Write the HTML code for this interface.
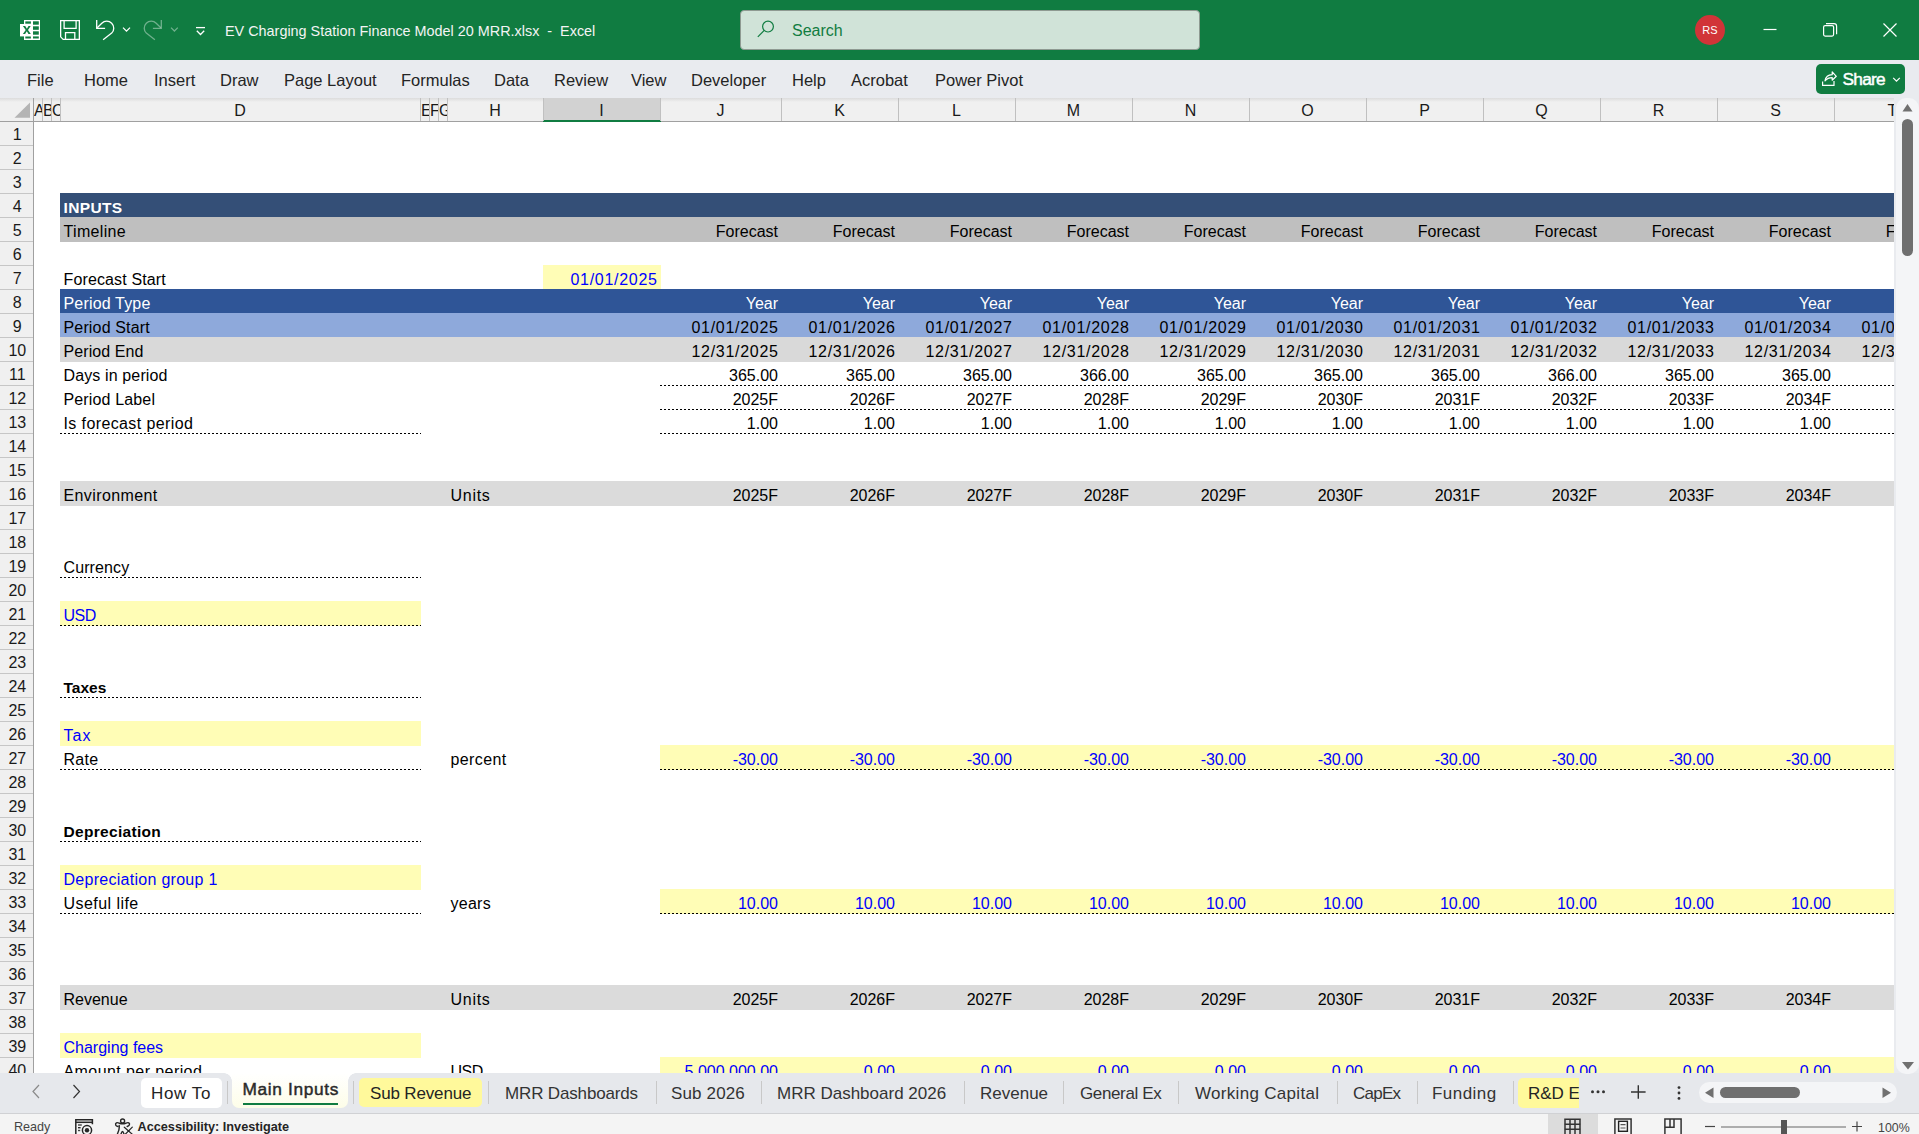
<!DOCTYPE html><html><head><meta charset="utf-8"><style>

*{box-sizing:border-box}
html,body{margin:0;padding:0}
body{width:1919px;height:1134px;overflow:hidden;position:relative;font-family:"Liberation Sans",sans-serif;background:#fff;color:#000}
.a{position:absolute}
.t{position:absolute;white-space:pre;line-height:1}
.c{position:absolute;white-space:pre;font-size:16px;line-height:24px;height:24px;overflow:visible}
.r{text-align:right}
.w{color:#fff}
.b{color:#0000FF}
.bd{font-weight:bold;font-size:15.5px}
.dot{position:absolute;height:1px;background:repeating-linear-gradient(90deg,#000 0 2px,transparent 2px 4px)}
.ch{position:absolute;top:98px;height:23px;font-size:16px;line-height:23px;text-align:center;color:#222;border-right:1px solid #C6C6C6}
.rh{position:absolute;left:0;width:33px;height:24px;font-size:16px;line-height:24px;text-align:center;color:#222;border-bottom:1px solid #C6C6C6}
.tab{position:absolute;white-space:pre;font-size:16.6px;line-height:1;color:#242424}
.sep{position:absolute;top:1081px;width:1px;height:23px;background:#C8C8C8}

</style></head><body>
<div class="a" style="left:0;top:0;width:1919px;height:60px;background:#107C41"></div>
<svg class="a" style="left:0;top:0" width="220" height="60" viewBox="0 0 220 60">
<g fill="#fff">
  <rect x="24" y="20" width="16" height="20"/>
  <rect x="20" y="24" width="13" height="12.4"/>
</g>
<g fill="#107C41">
  <rect x="33" y="21.3" width="5.8" height="3.4"/>
  <rect x="33" y="26.3" width="5.8" height="3.5"/>
  <rect x="33" y="31.3" width="5.8" height="3.4"/>
  <rect x="33" y="36.4" width="5.8" height="2.1"/>
  <rect x="25.3" y="21.4" width="5.6" height="2.3"/>
  <rect x="25.3" y="36.5" width="5.6" height="2"/>
  <path d="M22.9 26h2.3l1.7 2.7l1.6-2.7h2.2l-2.7 4l2.8 4h-2.3l-1.7-2.8l-1.7 2.8h-2.2l2.8-4z"/>
</g>
<g fill="none" stroke="#fff" stroke-width="1.3">
  <path d="M60.65 20.65h18.7v18.7h-16.2l-2.5-2.5z"/>
  <path d="M64.1 20.65v7.7h12v-7.7"/>
  <path d="M65.5 39.35v-6.8h9.3v6.8"/>
</g>
<g fill="none" stroke="#fff" stroke-width="1.3" stroke-linecap="butt">
  <path d="M96.7 20v8.3h8.4"/>
  <path d="M97.2 27.8l4.6-4.6a7 7 0 0 1 9.9 9.9l-8.6 6.6" stroke-linejoin="round"/>
  <path d="M123 27.6l3.5 3.5l3.5-3.5"/>
</g>
<g fill="none" stroke="#fff" stroke-opacity="0.4" stroke-width="1.3">
  <path d="M161.3 20v8.3h-8.4"/>
  <path d="M160.8 27.8l-4.6-4.6a7 7 0 0 0 -9.9 9.9l8.6 6.6"/>
  <path d="M171 27.6l3.4 3.4l3.4-3.4"/>
</g>
<g fill="none" stroke="#fff" stroke-width="1.3">
  <path d="M196 27.6h9"/>
  <path d="M196.8 30.8l3.7 3.7l3.7-3.7"/>
</g>
</svg>
<div class="t" style="left:225px;top:24px;font-size:14.4px;color:#F4F4F4">EV Charging Station Finance Model 20 MRR.xlsx  -  Excel</div>
<div class="a" style="left:740px;top:10px;width:460px;height:40px;background:#D0E3D8;border:1px solid #8E9A92;border-radius:4px"></div>
<svg class="a" style="left:750px;top:15px" width="30" height="30" viewBox="750 15 30 30">
<g fill="none" stroke="#107C41" stroke-width="1.2"><circle cx="768" cy="26.6" r="5.4"/><path d="M764.2 30.4l-6.4 6.4"/></g></svg>
<div class="t" style="left:792px;top:22.5px;font-size:16px;color:#107C41">Search</div>
<div class="a" style="left:1695px;top:15px;width:30px;height:30px;border-radius:50%;background:#D13438"></div>
<div class="t" style="left:1695px;top:25px;width:30px;text-align:center;font-size:11px;color:#fff">RS</div>
<svg class="a" style="left:1750px;top:15px" width="160" height="30" viewBox="1750 15 160 30">
<g fill="none" stroke="#fff" stroke-width="1.2">
<path d="M1763.5 29.5h13"/>
<rect x="1823.6" y="25.6" width="10" height="10.5" rx="1.5"/>
<path d="M1826 23.6h8a2.6 2.6 0 0 1 2.6 2.6v8"/>
<path d="M1883.5 23.5l13 13M1896.5 23.5l-13 13"/>
</g></svg>
<div class="a" style="left:0;top:60px;width:1919px;height:38px;background:#E9EBEF"></div>
<div class="t" style="left:27px;top:72px;font-size:16.5px;color:#242424">File</div>
<div class="t" style="left:84px;top:72px;font-size:16.5px;color:#242424">Home</div>
<div class="t" style="left:154px;top:72px;font-size:16.5px;color:#242424">Insert</div>
<div class="t" style="left:220px;top:72px;font-size:16.5px;color:#242424">Draw</div>
<div class="t" style="left:284px;top:72px;font-size:16.5px;color:#242424">Page Layout</div>
<div class="t" style="left:401px;top:72px;font-size:16.5px;color:#242424">Formulas</div>
<div class="t" style="left:494px;top:72px;font-size:16.5px;color:#242424">Data</div>
<div class="t" style="left:554px;top:72px;font-size:16.5px;color:#242424">Review</div>
<div class="t" style="left:631px;top:72px;font-size:16.5px;color:#242424">View</div>
<div class="t" style="left:691px;top:72px;font-size:16.5px;color:#242424">Developer</div>
<div class="t" style="left:792px;top:72px;font-size:16.5px;color:#242424">Help</div>
<div class="t" style="left:851px;top:72px;font-size:16.5px;color:#242424">Acrobat</div>
<div class="t" style="left:935px;top:72px;font-size:16.5px;color:#242424">Power Pivot</div>
<div class="a" style="left:1816px;top:64px;width:89px;height:30px;background:#107C41;border-radius:5px"></div>
<svg class="a" style="left:1816px;top:64px" width="89" height="30" viewBox="1816 64 89 30">
<g fill="none" stroke="#fff" stroke-width="1.2">
<path d="M1822.6 81.4v3.9h11.4v-4.3"/>
<path d="M1825 80.8C1825.6 77.2 1828.2 74.9 1832.2 74.7V71.9L1836.3 76.3L1832.2 80.2V77.6C1829.2 77.6 1826.8 78.7 1825 80.8Z" stroke-linejoin="round"/>
<path d="M1893.2 77.8l3.3 3.3l3.3-3.3"/>
</g></svg>
<div class="t" style="left:1842.5px;top:70.5px;font-size:17.3px;letter-spacing:-0.75px;-webkit-text-stroke:0.45px #fff;color:#fff">Share</div>
<div class="a" style="left:34px;top:122px;width:1860px;height:951px;overflow:hidden;background:#fff">
<div class="a" style="left:26px;top:71px;width:1892px;height:25px;background:#344F77"></div>
<div class="a" style="left:26px;top:95px;width:1892px;height:25px;background:#BFBFBF"></div>
<div class="a" style="left:509px;top:143px;width:118px;height:25px;background:#FFFDB6"></div>
<div class="a" style="left:26px;top:167px;width:1892px;height:25px;background:#2F5597"></div>
<div class="a" style="left:26px;top:191px;width:1892px;height:25px;background:#8EA9DB"></div>
<div class="a" style="left:26px;top:215px;width:1892px;height:25px;background:#D9D9D9"></div>
<div class="a" style="left:26px;top:359px;width:1892px;height:25px;background:#DBDBDB"></div>
<div class="a" style="left:26px;top:479px;width:361px;height:25px;background:#FFFDB6"></div>
<div class="a" style="left:26px;top:599px;width:361px;height:25px;background:#FFFDB6"></div>
<div class="a" style="left:626px;top:623px;width:1292px;height:25px;background:#FFFDB6"></div>
<div class="a" style="left:26px;top:743px;width:361px;height:25px;background:#FFFDB6"></div>
<div class="a" style="left:626px;top:767px;width:1292px;height:25px;background:#FFFDB6"></div>
<div class="a" style="left:26px;top:863px;width:1892px;height:25px;background:#DBDBDB"></div>
<div class="a" style="left:26px;top:911px;width:361px;height:25px;background:#FFFDB6"></div>
<div class="a" style="left:626px;top:935px;width:1292px;height:25px;background:#FFFDB6"></div>
<div class="dot" style="left:626px;top:263px;width:1292px"></div>
<div class="dot" style="left:626px;top:287px;width:1292px"></div>
<div class="dot" style="left:26px;top:311px;width:361px"></div>
<div class="dot" style="left:626px;top:311px;width:1292px"></div>
<div class="dot" style="left:26px;top:455px;width:361px"></div>
<div class="dot" style="left:26px;top:503px;width:361px"></div>
<div class="dot" style="left:26px;top:575px;width:361px"></div>
<div class="dot" style="left:26px;top:647px;width:361px"></div>
<div class="dot" style="left:626px;top:647px;width:1292px"></div>
<div class="dot" style="left:26px;top:719px;width:361px"></div>
<div class="dot" style="left:26px;top:791px;width:361px"></div>
<div class="dot" style="left:626px;top:791px;width:1292px"></div>
<div class="c w bd" style="left:29.5px;top:74px;letter-spacing:0.360px">INPUTS</div>
<div class="c " style="left:29.5px;top:98px;letter-spacing:0.329px">Timeline</div>
<div class="c r " style="left:626px;top:98px;width:118px">Forecast</div>
<div class="c r " style="left:747px;top:98px;width:114px">Forecast</div>
<div class="c r " style="left:864px;top:98px;width:114px">Forecast</div>
<div class="c r " style="left:981px;top:98px;width:114px">Forecast</div>
<div class="c r " style="left:1098px;top:98px;width:114px">Forecast</div>
<div class="c r " style="left:1215px;top:98px;width:114px">Forecast</div>
<div class="c r " style="left:1332px;top:98px;width:114px">Forecast</div>
<div class="c r " style="left:1449px;top:98px;width:114px">Forecast</div>
<div class="c r " style="left:1566px;top:98px;width:114px">Forecast</div>
<div class="c r " style="left:1683px;top:98px;width:114px">Forecast</div>
<div class="c r " style="left:1800px;top:98px;width:114px">Forecast</div>
<div class="c " style="left:29.5px;top:146px;letter-spacing:0.138px">Forecast Start</div>
<div class="c r b" style="left:509px;top:146px;width:114.72px;letter-spacing:0.72px">01/01/2025</div>
<div class="c w" style="left:29.5px;top:170px;letter-spacing:0.170px">Period Type</div>
<div class="c r w" style="left:626px;top:170px;width:118px">Year</div>
<div class="c r w" style="left:747px;top:170px;width:114px">Year</div>
<div class="c r w" style="left:864px;top:170px;width:114px">Year</div>
<div class="c r w" style="left:981px;top:170px;width:114px">Year</div>
<div class="c r w" style="left:1098px;top:170px;width:114px">Year</div>
<div class="c r w" style="left:1215px;top:170px;width:114px">Year</div>
<div class="c r w" style="left:1332px;top:170px;width:114px">Year</div>
<div class="c r w" style="left:1449px;top:170px;width:114px">Year</div>
<div class="c r w" style="left:1566px;top:170px;width:114px">Year</div>
<div class="c r w" style="left:1683px;top:170px;width:114px">Year</div>
<div class="c r w" style="left:1800px;top:170px;width:114px">Year</div>
<div class="c " style="left:29.5px;top:194px;letter-spacing:0.155px">Period Start</div>
<div class="c r " style="left:626px;top:194px;width:118.72px;letter-spacing:0.72px">01/01/2025</div>
<div class="c r " style="left:747px;top:194px;width:114.72px;letter-spacing:0.72px">01/01/2026</div>
<div class="c r " style="left:864px;top:194px;width:114.72px;letter-spacing:0.72px">01/01/2027</div>
<div class="c r " style="left:981px;top:194px;width:114.72px;letter-spacing:0.72px">01/01/2028</div>
<div class="c r " style="left:1098px;top:194px;width:114.72px;letter-spacing:0.72px">01/01/2029</div>
<div class="c r " style="left:1215px;top:194px;width:114.72px;letter-spacing:0.72px">01/01/2030</div>
<div class="c r " style="left:1332px;top:194px;width:114.72px;letter-spacing:0.72px">01/01/2031</div>
<div class="c r " style="left:1449px;top:194px;width:114.72px;letter-spacing:0.72px">01/01/2032</div>
<div class="c r " style="left:1566px;top:194px;width:114.72px;letter-spacing:0.72px">01/01/2033</div>
<div class="c r " style="left:1683px;top:194px;width:114.72px;letter-spacing:0.72px">01/01/2034</div>
<div class="c r " style="left:1800px;top:194px;width:114.72px;letter-spacing:0.72px">01/01/2035</div>
<div class="c " style="left:29.5px;top:218px;letter-spacing:0.078px">Period End</div>
<div class="c r " style="left:626px;top:218px;width:118.72px;letter-spacing:0.72px">12/31/2025</div>
<div class="c r " style="left:747px;top:218px;width:114.72px;letter-spacing:0.72px">12/31/2026</div>
<div class="c r " style="left:864px;top:218px;width:114.72px;letter-spacing:0.72px">12/31/2027</div>
<div class="c r " style="left:981px;top:218px;width:114.72px;letter-spacing:0.72px">12/31/2028</div>
<div class="c r " style="left:1098px;top:218px;width:114.72px;letter-spacing:0.72px">12/31/2029</div>
<div class="c r " style="left:1215px;top:218px;width:114.72px;letter-spacing:0.72px">12/31/2030</div>
<div class="c r " style="left:1332px;top:218px;width:114.72px;letter-spacing:0.72px">12/31/2031</div>
<div class="c r " style="left:1449px;top:218px;width:114.72px;letter-spacing:0.72px">12/31/2032</div>
<div class="c r " style="left:1566px;top:218px;width:114.72px;letter-spacing:0.72px">12/31/2033</div>
<div class="c r " style="left:1683px;top:218px;width:114.72px;letter-spacing:0.72px">12/31/2034</div>
<div class="c r " style="left:1800px;top:218px;width:114.72px;letter-spacing:0.72px">12/31/2035</div>
<div class="c " style="left:29.5px;top:242px;letter-spacing:0.131px">Days in period</div>
<div class="c r " style="left:626px;top:242px;width:118px">365.00</div>
<div class="c r " style="left:747px;top:242px;width:114px">365.00</div>
<div class="c r " style="left:864px;top:242px;width:114px">365.00</div>
<div class="c r " style="left:981px;top:242px;width:114px">366.00</div>
<div class="c r " style="left:1098px;top:242px;width:114px">365.00</div>
<div class="c r " style="left:1215px;top:242px;width:114px">365.00</div>
<div class="c r " style="left:1332px;top:242px;width:114px">365.00</div>
<div class="c r " style="left:1449px;top:242px;width:114px">366.00</div>
<div class="c r " style="left:1566px;top:242px;width:114px">365.00</div>
<div class="c r " style="left:1683px;top:242px;width:114px">365.00</div>
<div class="c r " style="left:1800px;top:242px;width:114px">365.00</div>
<div class="c " style="left:29.5px;top:266px;letter-spacing:0.145px">Period Label</div>
<div class="c r " style="left:626px;top:266px;width:118px">2025F</div>
<div class="c r " style="left:747px;top:266px;width:114px">2026F</div>
<div class="c r " style="left:864px;top:266px;width:114px">2027F</div>
<div class="c r " style="left:981px;top:266px;width:114px">2028F</div>
<div class="c r " style="left:1098px;top:266px;width:114px">2029F</div>
<div class="c r " style="left:1215px;top:266px;width:114px">2030F</div>
<div class="c r " style="left:1332px;top:266px;width:114px">2031F</div>
<div class="c r " style="left:1449px;top:266px;width:114px">2032F</div>
<div class="c r " style="left:1566px;top:266px;width:114px">2033F</div>
<div class="c r " style="left:1683px;top:266px;width:114px">2034F</div>
<div class="c r " style="left:1800px;top:266px;width:114px">2035F</div>
<div class="c " style="left:29.5px;top:290px;letter-spacing:0.388px">Is forecast period</div>
<div class="c r " style="left:626px;top:290px;width:118px">1.00</div>
<div class="c r " style="left:747px;top:290px;width:114px">1.00</div>
<div class="c r " style="left:864px;top:290px;width:114px">1.00</div>
<div class="c r " style="left:981px;top:290px;width:114px">1.00</div>
<div class="c r " style="left:1098px;top:290px;width:114px">1.00</div>
<div class="c r " style="left:1215px;top:290px;width:114px">1.00</div>
<div class="c r " style="left:1332px;top:290px;width:114px">1.00</div>
<div class="c r " style="left:1449px;top:290px;width:114px">1.00</div>
<div class="c r " style="left:1566px;top:290px;width:114px">1.00</div>
<div class="c r " style="left:1683px;top:290px;width:114px">1.00</div>
<div class="c r " style="left:1800px;top:290px;width:114px">1.00</div>
<div class="c " style="left:29.5px;top:362px;letter-spacing:0.390px">Environment</div>
<div class="c " style="left:416.5px;top:362px;letter-spacing:0.725px">Units</div>
<div class="c r " style="left:626px;top:362px;width:118px">2025F</div>
<div class="c r " style="left:747px;top:362px;width:114px">2026F</div>
<div class="c r " style="left:864px;top:362px;width:114px">2027F</div>
<div class="c r " style="left:981px;top:362px;width:114px">2028F</div>
<div class="c r " style="left:1098px;top:362px;width:114px">2029F</div>
<div class="c r " style="left:1215px;top:362px;width:114px">2030F</div>
<div class="c r " style="left:1332px;top:362px;width:114px">2031F</div>
<div class="c r " style="left:1449px;top:362px;width:114px">2032F</div>
<div class="c r " style="left:1566px;top:362px;width:114px">2033F</div>
<div class="c r " style="left:1683px;top:362px;width:114px">2034F</div>
<div class="c r " style="left:1800px;top:362px;width:114px">2035F</div>
<div class="c " style="left:29.5px;top:434px;letter-spacing:0.114px">Currency</div>
<div class="c b" style="left:29.5px;top:482px;letter-spacing:-0.550px">USD</div>
<div class="c bd" style="left:29.5px;top:554px">Taxes</div>
<div class="c b" style="left:29.5px;top:602px;letter-spacing:1.050px">Tax</div>
<div class="c " style="left:29.5px;top:626px;letter-spacing:0.267px">Rate</div>
<div class="c " style="left:416.5px;top:626px;letter-spacing:0.400px">percent</div>
<div class="c r b" style="left:626px;top:626px;width:118px">-30.00</div>
<div class="c r b" style="left:747px;top:626px;width:114px">-30.00</div>
<div class="c r b" style="left:864px;top:626px;width:114px">-30.00</div>
<div class="c r b" style="left:981px;top:626px;width:114px">-30.00</div>
<div class="c r b" style="left:1098px;top:626px;width:114px">-30.00</div>
<div class="c r b" style="left:1215px;top:626px;width:114px">-30.00</div>
<div class="c r b" style="left:1332px;top:626px;width:114px">-30.00</div>
<div class="c r b" style="left:1449px;top:626px;width:114px">-30.00</div>
<div class="c r b" style="left:1566px;top:626px;width:114px">-30.00</div>
<div class="c r b" style="left:1683px;top:626px;width:114px">-30.00</div>
<div class="c r b" style="left:1800px;top:626px;width:114px">-30.00</div>
<div class="c bd" style="left:29.5px;top:698px;letter-spacing:0.309px">Depreciation</div>
<div class="c b" style="left:29.5px;top:746px;letter-spacing:0.279px">Depreciation group 1</div>
<div class="c " style="left:29.5px;top:770px;letter-spacing:0.450px">Useful life</div>
<div class="c " style="left:416.5px;top:770px;letter-spacing:0.250px">years</div>
<div class="c r b" style="left:626px;top:770px;width:118px">10.00</div>
<div class="c r b" style="left:747px;top:770px;width:114px">10.00</div>
<div class="c r b" style="left:864px;top:770px;width:114px">10.00</div>
<div class="c r b" style="left:981px;top:770px;width:114px">10.00</div>
<div class="c r b" style="left:1098px;top:770px;width:114px">10.00</div>
<div class="c r b" style="left:1215px;top:770px;width:114px">10.00</div>
<div class="c r b" style="left:1332px;top:770px;width:114px">10.00</div>
<div class="c r b" style="left:1449px;top:770px;width:114px">10.00</div>
<div class="c r b" style="left:1566px;top:770px;width:114px">10.00</div>
<div class="c r b" style="left:1683px;top:770px;width:114px">10.00</div>
<div class="c r b" style="left:1800px;top:770px;width:114px">10.00</div>
<div class="c " style="left:29.5px;top:866px">Revenue</div>
<div class="c " style="left:416.5px;top:866px;letter-spacing:0.725px">Units</div>
<div class="c r " style="left:626px;top:866px;width:118px">2025F</div>
<div class="c r " style="left:747px;top:866px;width:114px">2026F</div>
<div class="c r " style="left:864px;top:866px;width:114px">2027F</div>
<div class="c r " style="left:981px;top:866px;width:114px">2028F</div>
<div class="c r " style="left:1098px;top:866px;width:114px">2029F</div>
<div class="c r " style="left:1215px;top:866px;width:114px">2030F</div>
<div class="c r " style="left:1332px;top:866px;width:114px">2031F</div>
<div class="c r " style="left:1449px;top:866px;width:114px">2032F</div>
<div class="c r " style="left:1566px;top:866px;width:114px">2033F</div>
<div class="c r " style="left:1683px;top:866px;width:114px">2034F</div>
<div class="c r " style="left:1800px;top:866px;width:114px">2035F</div>
<div class="c b" style="left:29.5px;top:914px">Charging fees</div>
<div class="c " style="left:29.5px;top:938px;letter-spacing:0.419px">Amount per period</div>
<div class="c " style="left:416.5px;top:938px;letter-spacing:-0.550px">USD</div>
<div class="c r b" style="left:626px;top:938px;width:118px">5,000,000.00</div>
<div class="c r b" style="left:747px;top:938px;width:114px">0.00</div>
<div class="c r b" style="left:864px;top:938px;width:114px">0.00</div>
<div class="c r b" style="left:981px;top:938px;width:114px">0.00</div>
<div class="c r b" style="left:1098px;top:938px;width:114px">0.00</div>
<div class="c r b" style="left:1215px;top:938px;width:114px">0.00</div>
<div class="c r b" style="left:1332px;top:938px;width:114px">0.00</div>
<div class="c r b" style="left:1449px;top:938px;width:114px">0.00</div>
<div class="c r b" style="left:1566px;top:938px;width:114px">0.00</div>
<div class="c r b" style="left:1683px;top:938px;width:114px">0.00</div>
<div class="c r b" style="left:1800px;top:938px;width:114px">0.00</div>
</div>
<div class="a" style="left:0;top:98px;width:1894px;height:23px;background:#F0F0F0"></div>
<div class="a" style="left:0;top:98px;width:1894px;height:4px;background:linear-gradient(#DCDCDC,#F0F0F0)"></div>
<div class="a" style="left:0;top:121px;width:1894px;height:1px;background:#A0A0A0"></div>
<div class="a" style="left:543px;top:98px;width:118px;height:22px;background:#D2D2D2"></div>
<div class="a" style="left:543px;top:120px;width:118px;height:2px;background:#107C41"></div>
<div id="colhdr-slot"></div>
<div class="a" style="left:33px;top:98px;width:1px;height:23px;background:#C0C0C0"></div>
<div class="a" style="left:34px;top:98px;width:8px;height:23px;overflow:hidden"><div class="t" style="left:0px;top:5px;font-size:16px;color:#1a1a1a">A</div></div>
<div class="a" style="left:42px;top:98px;width:1px;height:23px;background:#C0C0C0"></div>
<div class="a" style="left:43px;top:98px;width:8px;height:23px;overflow:hidden"><div class="t" style="left:0px;top:5px;font-size:16px;color:#1a1a1a">B</div></div>
<div class="a" style="left:51px;top:98px;width:1px;height:23px;background:#C0C0C0"></div>
<div class="a" style="left:52px;top:98px;width:8px;height:23px;overflow:hidden"><div class="t" style="left:0px;top:5px;font-size:16px;color:#1a1a1a">C</div></div>
<div class="a" style="left:60px;top:98px;width:1px;height:23px;background:#C0C0C0"></div>
<div class="a" style="left:61px;top:98px;width:359px;height:23px;overflow:hidden"><div class="t" style="left:169.0px;top:5px;width:20px;text-align:center;font-size:16px;color:#1a1a1a">D</div></div>
<div class="a" style="left:420px;top:98px;width:1px;height:23px;background:#C0C0C0"></div>
<div class="a" style="left:421px;top:98px;width:8px;height:23px;overflow:hidden"><div class="t" style="left:0px;top:5px;font-size:16px;color:#1a1a1a">E</div></div>
<div class="a" style="left:429px;top:98px;width:1px;height:23px;background:#C0C0C0"></div>
<div class="a" style="left:430px;top:98px;width:8px;height:23px;overflow:hidden"><div class="t" style="left:0px;top:5px;font-size:16px;color:#1a1a1a">F</div></div>
<div class="a" style="left:438px;top:98px;width:1px;height:23px;background:#C0C0C0"></div>
<div class="a" style="left:439px;top:98px;width:8px;height:23px;overflow:hidden"><div class="t" style="left:0px;top:5px;font-size:16px;color:#1a1a1a">G</div></div>
<div class="a" style="left:447px;top:98px;width:1px;height:23px;background:#C0C0C0"></div>
<div class="a" style="left:448px;top:98px;width:95px;height:23px;overflow:hidden"><div class="t" style="left:37.0px;top:5px;width:20px;text-align:center;font-size:16px;color:#1a1a1a">H</div></div>
<div class="a" style="left:543px;top:98px;width:1px;height:23px;background:#C0C0C0"></div>
<div class="a" style="left:544px;top:98px;width:116px;height:23px;overflow:hidden"><div class="t" style="left:47.5px;top:5px;width:20px;text-align:center;font-size:16px;color:#1a1a1a">I</div></div>
<div class="a" style="left:660px;top:98px;width:1px;height:23px;background:#C0C0C0"></div>
<div class="a" style="left:661px;top:98px;width:120px;height:23px;overflow:hidden"><div class="t" style="left:49.5px;top:5px;width:20px;text-align:center;font-size:16px;color:#1a1a1a">J</div></div>
<div class="a" style="left:781px;top:98px;width:1px;height:23px;background:#C0C0C0"></div>
<div class="a" style="left:782px;top:98px;width:116px;height:23px;overflow:hidden"><div class="t" style="left:47.5px;top:5px;width:20px;text-align:center;font-size:16px;color:#1a1a1a">K</div></div>
<div class="a" style="left:898px;top:98px;width:1px;height:23px;background:#C0C0C0"></div>
<div class="a" style="left:899px;top:98px;width:116px;height:23px;overflow:hidden"><div class="t" style="left:47.5px;top:5px;width:20px;text-align:center;font-size:16px;color:#1a1a1a">L</div></div>
<div class="a" style="left:1015px;top:98px;width:1px;height:23px;background:#C0C0C0"></div>
<div class="a" style="left:1016px;top:98px;width:116px;height:23px;overflow:hidden"><div class="t" style="left:47.5px;top:5px;width:20px;text-align:center;font-size:16px;color:#1a1a1a">M</div></div>
<div class="a" style="left:1132px;top:98px;width:1px;height:23px;background:#C0C0C0"></div>
<div class="a" style="left:1133px;top:98px;width:116px;height:23px;overflow:hidden"><div class="t" style="left:47.5px;top:5px;width:20px;text-align:center;font-size:16px;color:#1a1a1a">N</div></div>
<div class="a" style="left:1249px;top:98px;width:1px;height:23px;background:#C0C0C0"></div>
<div class="a" style="left:1250px;top:98px;width:116px;height:23px;overflow:hidden"><div class="t" style="left:47.5px;top:5px;width:20px;text-align:center;font-size:16px;color:#1a1a1a">O</div></div>
<div class="a" style="left:1366px;top:98px;width:1px;height:23px;background:#C0C0C0"></div>
<div class="a" style="left:1367px;top:98px;width:116px;height:23px;overflow:hidden"><div class="t" style="left:47.5px;top:5px;width:20px;text-align:center;font-size:16px;color:#1a1a1a">P</div></div>
<div class="a" style="left:1483px;top:98px;width:1px;height:23px;background:#C0C0C0"></div>
<div class="a" style="left:1484px;top:98px;width:116px;height:23px;overflow:hidden"><div class="t" style="left:47.5px;top:5px;width:20px;text-align:center;font-size:16px;color:#1a1a1a">Q</div></div>
<div class="a" style="left:1600px;top:98px;width:1px;height:23px;background:#C0C0C0"></div>
<div class="a" style="left:1601px;top:98px;width:116px;height:23px;overflow:hidden"><div class="t" style="left:47.5px;top:5px;width:20px;text-align:center;font-size:16px;color:#1a1a1a">R</div></div>
<div class="a" style="left:1717px;top:98px;width:1px;height:23px;background:#C0C0C0"></div>
<div class="a" style="left:1718px;top:98px;width:116px;height:23px;overflow:hidden"><div class="t" style="left:47.5px;top:5px;width:20px;text-align:center;font-size:16px;color:#1a1a1a">S</div></div>
<div class="a" style="left:1834px;top:98px;width:1px;height:23px;background:#C0C0C0"></div>
<div class="a" style="left:1835px;top:98px;width:59px;height:23px;overflow:hidden"><div class="t" style="left:47.5px;top:5px;width:20px;text-align:center;font-size:16px;color:#1a1a1a">T</div></div>
<div class="a" style="left:0;top:122px;width:33px;height:951px;background:#F0F0F0;overflow:hidden">
<div class="a" style="left:0;top:23px;width:33px;height:1px;background:#C6C6C6"></div>
<div class="t" style="left:0.8px;top:5px;width:33px;text-align:center;font-size:16px;color:#1a1a1a">1</div>
<div class="a" style="left:0;top:47px;width:33px;height:1px;background:#C6C6C6"></div>
<div class="t" style="left:0.8px;top:29px;width:33px;text-align:center;font-size:16px;color:#1a1a1a">2</div>
<div class="a" style="left:0;top:71px;width:33px;height:1px;background:#C6C6C6"></div>
<div class="t" style="left:0.8px;top:53px;width:33px;text-align:center;font-size:16px;color:#1a1a1a">3</div>
<div class="a" style="left:0;top:95px;width:33px;height:1px;background:#C6C6C6"></div>
<div class="t" style="left:0.8px;top:77px;width:33px;text-align:center;font-size:16px;color:#1a1a1a">4</div>
<div class="a" style="left:0;top:119px;width:33px;height:1px;background:#C6C6C6"></div>
<div class="t" style="left:0.8px;top:101px;width:33px;text-align:center;font-size:16px;color:#1a1a1a">5</div>
<div class="a" style="left:0;top:143px;width:33px;height:1px;background:#C6C6C6"></div>
<div class="t" style="left:0.8px;top:125px;width:33px;text-align:center;font-size:16px;color:#1a1a1a">6</div>
<div class="a" style="left:0;top:167px;width:33px;height:1px;background:#C6C6C6"></div>
<div class="t" style="left:0.8px;top:149px;width:33px;text-align:center;font-size:16px;color:#1a1a1a">7</div>
<div class="a" style="left:0;top:191px;width:33px;height:1px;background:#C6C6C6"></div>
<div class="t" style="left:0.8px;top:173px;width:33px;text-align:center;font-size:16px;color:#1a1a1a">8</div>
<div class="a" style="left:0;top:215px;width:33px;height:1px;background:#C6C6C6"></div>
<div class="t" style="left:0.8px;top:197px;width:33px;text-align:center;font-size:16px;color:#1a1a1a">9</div>
<div class="a" style="left:0;top:239px;width:33px;height:1px;background:#C6C6C6"></div>
<div class="t" style="left:0.8px;top:221px;width:33px;text-align:center;font-size:16px;color:#1a1a1a">10</div>
<div class="a" style="left:0;top:263px;width:33px;height:1px;background:#C6C6C6"></div>
<div class="t" style="left:0.8px;top:245px;width:33px;text-align:center;font-size:16px;color:#1a1a1a">11</div>
<div class="a" style="left:0;top:287px;width:33px;height:1px;background:#C6C6C6"></div>
<div class="t" style="left:0.8px;top:269px;width:33px;text-align:center;font-size:16px;color:#1a1a1a">12</div>
<div class="a" style="left:0;top:311px;width:33px;height:1px;background:#C6C6C6"></div>
<div class="t" style="left:0.8px;top:293px;width:33px;text-align:center;font-size:16px;color:#1a1a1a">13</div>
<div class="a" style="left:0;top:335px;width:33px;height:1px;background:#C6C6C6"></div>
<div class="t" style="left:0.8px;top:317px;width:33px;text-align:center;font-size:16px;color:#1a1a1a">14</div>
<div class="a" style="left:0;top:359px;width:33px;height:1px;background:#C6C6C6"></div>
<div class="t" style="left:0.8px;top:341px;width:33px;text-align:center;font-size:16px;color:#1a1a1a">15</div>
<div class="a" style="left:0;top:383px;width:33px;height:1px;background:#C6C6C6"></div>
<div class="t" style="left:0.8px;top:365px;width:33px;text-align:center;font-size:16px;color:#1a1a1a">16</div>
<div class="a" style="left:0;top:407px;width:33px;height:1px;background:#C6C6C6"></div>
<div class="t" style="left:0.8px;top:389px;width:33px;text-align:center;font-size:16px;color:#1a1a1a">17</div>
<div class="a" style="left:0;top:431px;width:33px;height:1px;background:#C6C6C6"></div>
<div class="t" style="left:0.8px;top:413px;width:33px;text-align:center;font-size:16px;color:#1a1a1a">18</div>
<div class="a" style="left:0;top:455px;width:33px;height:1px;background:#C6C6C6"></div>
<div class="t" style="left:0.8px;top:437px;width:33px;text-align:center;font-size:16px;color:#1a1a1a">19</div>
<div class="a" style="left:0;top:479px;width:33px;height:1px;background:#C6C6C6"></div>
<div class="t" style="left:0.8px;top:461px;width:33px;text-align:center;font-size:16px;color:#1a1a1a">20</div>
<div class="a" style="left:0;top:503px;width:33px;height:1px;background:#C6C6C6"></div>
<div class="t" style="left:0.8px;top:485px;width:33px;text-align:center;font-size:16px;color:#1a1a1a">21</div>
<div class="a" style="left:0;top:527px;width:33px;height:1px;background:#C6C6C6"></div>
<div class="t" style="left:0.8px;top:509px;width:33px;text-align:center;font-size:16px;color:#1a1a1a">22</div>
<div class="a" style="left:0;top:551px;width:33px;height:1px;background:#C6C6C6"></div>
<div class="t" style="left:0.8px;top:533px;width:33px;text-align:center;font-size:16px;color:#1a1a1a">23</div>
<div class="a" style="left:0;top:575px;width:33px;height:1px;background:#C6C6C6"></div>
<div class="t" style="left:0.8px;top:557px;width:33px;text-align:center;font-size:16px;color:#1a1a1a">24</div>
<div class="a" style="left:0;top:599px;width:33px;height:1px;background:#C6C6C6"></div>
<div class="t" style="left:0.8px;top:581px;width:33px;text-align:center;font-size:16px;color:#1a1a1a">25</div>
<div class="a" style="left:0;top:623px;width:33px;height:1px;background:#C6C6C6"></div>
<div class="t" style="left:0.8px;top:605px;width:33px;text-align:center;font-size:16px;color:#1a1a1a">26</div>
<div class="a" style="left:0;top:647px;width:33px;height:1px;background:#C6C6C6"></div>
<div class="t" style="left:0.8px;top:629px;width:33px;text-align:center;font-size:16px;color:#1a1a1a">27</div>
<div class="a" style="left:0;top:671px;width:33px;height:1px;background:#C6C6C6"></div>
<div class="t" style="left:0.8px;top:653px;width:33px;text-align:center;font-size:16px;color:#1a1a1a">28</div>
<div class="a" style="left:0;top:695px;width:33px;height:1px;background:#C6C6C6"></div>
<div class="t" style="left:0.8px;top:677px;width:33px;text-align:center;font-size:16px;color:#1a1a1a">29</div>
<div class="a" style="left:0;top:719px;width:33px;height:1px;background:#C6C6C6"></div>
<div class="t" style="left:0.8px;top:701px;width:33px;text-align:center;font-size:16px;color:#1a1a1a">30</div>
<div class="a" style="left:0;top:743px;width:33px;height:1px;background:#C6C6C6"></div>
<div class="t" style="left:0.8px;top:725px;width:33px;text-align:center;font-size:16px;color:#1a1a1a">31</div>
<div class="a" style="left:0;top:767px;width:33px;height:1px;background:#C6C6C6"></div>
<div class="t" style="left:0.8px;top:749px;width:33px;text-align:center;font-size:16px;color:#1a1a1a">32</div>
<div class="a" style="left:0;top:791px;width:33px;height:1px;background:#C6C6C6"></div>
<div class="t" style="left:0.8px;top:773px;width:33px;text-align:center;font-size:16px;color:#1a1a1a">33</div>
<div class="a" style="left:0;top:815px;width:33px;height:1px;background:#C6C6C6"></div>
<div class="t" style="left:0.8px;top:797px;width:33px;text-align:center;font-size:16px;color:#1a1a1a">34</div>
<div class="a" style="left:0;top:839px;width:33px;height:1px;background:#C6C6C6"></div>
<div class="t" style="left:0.8px;top:821px;width:33px;text-align:center;font-size:16px;color:#1a1a1a">35</div>
<div class="a" style="left:0;top:863px;width:33px;height:1px;background:#C6C6C6"></div>
<div class="t" style="left:0.8px;top:845px;width:33px;text-align:center;font-size:16px;color:#1a1a1a">36</div>
<div class="a" style="left:0;top:887px;width:33px;height:1px;background:#C6C6C6"></div>
<div class="t" style="left:0.8px;top:869px;width:33px;text-align:center;font-size:16px;color:#1a1a1a">37</div>
<div class="a" style="left:0;top:911px;width:33px;height:1px;background:#C6C6C6"></div>
<div class="t" style="left:0.8px;top:893px;width:33px;text-align:center;font-size:16px;color:#1a1a1a">38</div>
<div class="a" style="left:0;top:935px;width:33px;height:1px;background:#C6C6C6"></div>
<div class="t" style="left:0.8px;top:917px;width:33px;text-align:center;font-size:16px;color:#1a1a1a">39</div>
<div class="a" style="left:0;top:959px;width:33px;height:1px;background:#C6C6C6"></div>
<div class="t" style="left:0.8px;top:941px;width:33px;text-align:center;font-size:16px;color:#1a1a1a">40</div>
</div>
<div class="a" style="left:33px;top:98px;width:1px;height:975px;background:#A0A0A0"></div>
<svg class="a" style="left:0;top:98px" width="33" height="23"><polygon points="30,4.6 30,19.8 14.5,19.8" fill="#B4B4B4"/></svg>
<div class="a" style="left:0;top:1073px;width:1919px;height:40px;background:#E6E8EC"></div>
<div class="a" style="left:232px;top:1073px;width:116px;height:35px;background:linear-gradient(#FFFFFF,#FDFDE8);border-radius:0 0 7px 7px"></div>
<div class="a" style="left:224px;top:1073px;width:8px;height:8px;background:radial-gradient(circle at 0 100%,#E6E8EC 7.5px,#fff 8px)"></div>
<div class="a" style="left:348px;top:1073px;width:8px;height:8px;background:radial-gradient(circle at 100% 100%,#E6E8EC 7.5px,#fff 8px)"></div>
<svg class="a" style="left:20px;top:1080px" width="80" height="25" viewBox="20 1080 80 25">
<g fill="none" stroke="#8A8A8A" stroke-width="1.2"><path d="M39 1085l-6 6.5l6 6.5"/></g>
<g fill="none" stroke="#333" stroke-width="1.2"><path d="M73.5 1085l6 6.5l-6 6.5"/></g>
</svg>
<div class="a" style="left:141px;top:1078px;width:81px;height:30px;background:#fff;border-radius:5px"></div>
<div class="a" style="left:359px;top:1078px;width:123px;height:29px;background:#FFF99B;border-radius:5px"></div>
<div class="a" style="left:1518px;top:1078px;width:61px;height:30px;background:#FFF99B;border-radius:5px 0 0 5px"></div>
<div class="tab" style="left:151px;top:1084.5px;font-size:17px;letter-spacing:0.6px;color:#242424">How To</div>
<div class="tab" style="left:370px;top:1084.5px;font-size:17px;letter-spacing:-0.16px;color:#242424">Sub Revenue</div>
<div class="tab" style="left:505px;top:1084.5px;font-size:17px;letter-spacing:-0.154px;color:#333">MRR Dashboards</div>
<div class="tab" style="left:671px;top:1084.5px;font-size:17px;letter-spacing:0.143px;color:#333">Sub 2026</div>
<div class="tab" style="left:777px;top:1084.5px;font-size:17px;letter-spacing:0.0px;color:#333">MRR Dashboard 2026</div>
<div class="tab" style="left:980px;top:1084.5px;font-size:17px;letter-spacing:0.0px;color:#333">Revenue</div>
<div class="tab" style="left:1080px;top:1084.5px;font-size:17px;letter-spacing:-0.367px;color:#333">General Ex</div>
<div class="tab" style="left:1195px;top:1084.5px;font-size:17px;letter-spacing:0.307px;color:#333">Working Capital</div>
<div class="tab" style="left:1353px;top:1084.5px;font-size:17px;letter-spacing:-0.75px;color:#333">CapEx</div>
<div class="tab" style="left:1432px;top:1084.5px;font-size:17px;letter-spacing:0.45px;color:#333">Funding</div>
<div class="tab" style="left:242.5px;top:1081.2px;font-size:17.3px;letter-spacing:0.65px;-webkit-text-stroke:0.45px #2a2a2a;color:#2a2a2a">Main Inputs</div>
<div class="a" style="left:243px;top:1103px;width:95px;height:2px;background:#107C41"></div>
<div class="a" style="left:1518px;top:1078px;width:61px;height:30px;overflow:hidden"><div class="tab" style="left:10px;top:6.5px;font-size:17px;color:#242424">R&amp;D Expenses</div></div>
<div class="sep" style="left:227px"></div>
<div class="sep" style="left:353px"></div>
<div class="sep" style="left:488px"></div>
<div class="sep" style="left:656px"></div>
<div class="sep" style="left:761px"></div>
<div class="sep" style="left:964px"></div>
<div class="sep" style="left:1063px"></div>
<div class="sep" style="left:1178px"></div>
<div class="sep" style="left:1337px"></div>
<div class="sep" style="left:1417px"></div>
<div class="sep" style="left:1513px"></div>
<svg class="a" style="left:1585px;top:1080px" width="110" height="25" viewBox="1585 1080 110 25">
<g fill="#333"><circle cx="1592.5" cy="1091.8" r="1.5"/><circle cx="1598" cy="1091.8" r="1.5"/><circle cx="1603.5" cy="1091.8" r="1.5"/>
<circle cx="1679" cy="1087.6" r="1.4"/><circle cx="1679" cy="1093" r="1.4"/><circle cx="1679" cy="1098.4" r="1.4"/></g>
<g stroke="#333" stroke-width="1.4"><path d="M1638.3 1085.3v13.5M1631 1092h14.6"/></g>
</svg>
<div class="a" style="left:1699px;top:1082px;width:198px;height:21px;background:#F4F5F7;border-radius:11px"></div>
<div class="a" style="left:1720px;top:1087px;width:80px;height:11px;background:#6F6F6F;border-radius:6px"></div>
<svg class="a" style="left:1700px;top:1082px" width="196" height="21" viewBox="1700 1082 196 21">
<g fill="#707070"><path d="M1705 1092.7l8.5-5.2v10.4z"/><path d="M1891 1092.7l-8.5-5.2v10.4z"/></g></svg>
<div class="a" style="left:1894px;top:98px;width:25px;height:975px;background:#E9EBEF"></div>
<div class="a" style="left:1896px;top:98px;width:23px;height:976px;background:#F4F5F7;border-radius:10px"></div>
<div class="a" style="left:1902px;top:119px;width:11px;height:137px;background:#6F6F6F;border-radius:6px"></div>
<svg class="a" style="left:1896px;top:98px" width="23" height="976" viewBox="1896 98 23 976">
<g fill="#707070"><path d="M1907.5 104l5 7.5h-10z"/><path d="M1908 1069.5l6-7.5h-12z"/></g></svg>
<div class="a" style="left:0;top:1113px;width:1919px;height:1px;background:#D0D1D4"></div>
<div class="a" style="left:0;top:1114px;width:1919px;height:20px;background:#F4F4F4"></div>
<div class="t" style="left:14px;top:1121px;font-size:12.6px;color:#444">Ready</div>
<div class="t" style="left:137.5px;top:1120.5px;font-size:12.7px;font-weight:bold;color:#242424">Accessibility: Investigate</div>
<svg class="a" style="left:70px;top:1114px" width="70" height="20" viewBox="70 1114 70 20">
<g fill="none" stroke="#262626" stroke-width="1.5">
<path d="M75.8 1134v-14.2h16.6v4.5"/><path d="M75.8 1122.3h16.6"/>
<circle cx="87" cy="1130.2" r="4.6"/>
</g>
<rect x="78" y="1124.3" width="3.8" height="1.4" fill="#444"/>
<rect x="78" y="1127" width="2.6" height="1.4" fill="#262626"/>
<rect x="78" y="1129.8" width="2.2" height="1.4" fill="#444"/>
<circle cx="87" cy="1130.2" r="2.2" fill="#262626"/>
<g fill="none" stroke="#262626" stroke-width="1.4" stroke-linecap="round">
<circle cx="122.6" cy="1121" r="2"/>
<path d="M118 1126.5c-2.5-0.5-3.2-2.6-1.6-3.6c1.5-1 3 0.8 4.5 0.8h3.4c1.5 0 3-1.8 4.5-0.8c1.4 1 0.8 2.6-1.6 3.6"/>
<path d="M119.2 1125.5c0.3 2.5 0 5-1.8 8.5M121 1134c0.5-1.5 1-2.5 1.5-2.5c0.5 0 1 1 1.5 2.5"/>
<path d="M124.3 1127.2l8.5 7.5M132.3 1127.2l-7.5 7.5" stroke-width="1.2"/>
</g></svg>
<div class="a" style="left:1548px;top:1114px;width:50px;height:20px;background:#DCDCDC"></div>
<svg class="a" style="left:1540px;top:1113px" width="379" height="21" viewBox="1540 1113 379 21">
<g fill="none" stroke="#444" stroke-width="1.2">
<path d="M1565 1118.5v16M1570 1118.5v16M1575 1118.5v16M1580 1118.5v16M1564.2 1119.2h16.6M1564.2 1124.2h16.6M1564.2 1129.2h16.6" stroke="#333" stroke-width="1.5"/>
<path d="M1614.9 1135v-16h16.2v16" stroke="#333" stroke-width="1.5"/><rect x="1618.6" y="1121.3" width="8.8" height="10" stroke="#222" stroke-width="1.4"/><path d="M1620.5 1124.6h5M1620.5 1128h5" stroke="#555" stroke-width="1.2"/>
<path d="M1664.9 1135v-16h16.2v16" stroke="#333" stroke-width="1.5"/><path d="M1670 1119v8.3M1674 1119v8.3h-9" stroke="#333" stroke-width="1.5"/>
<path d="M1705 1126.5h10"/>
<path d="M1852 1126.5h10M1857 1121.5v10"/>
</g>
<path d="M1721 1127h125" stroke="#666" stroke-width="1"/>
<rect x="1781" y="1120" width="6" height="14" fill="#555"/>
</svg>
<div class="t" style="left:1878px;top:1121.5px;font-size:12.4px;color:#444">100%</div>
</body></html>
